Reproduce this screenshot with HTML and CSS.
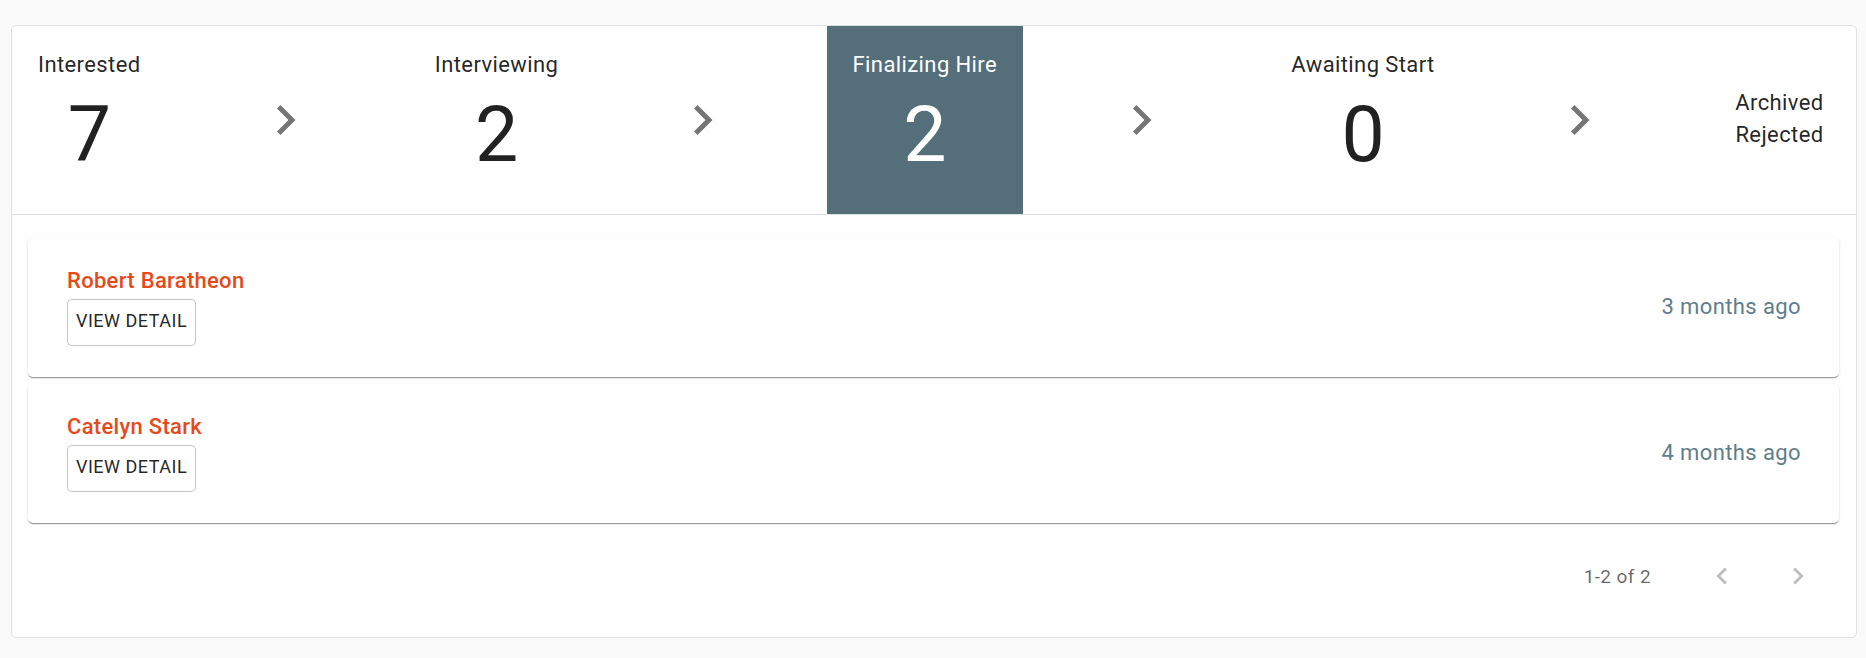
FILE: index.html
```html
<!DOCTYPE html>
<html lang="en">
<head>
<meta charset="utf-8">
<title>Pipeline</title>
<link rel="stylesheet" href="styles.css">
</head>
<body>
<div class="board">
  <div class="stages">
    <div class="stage">
      <div class="stage-label">Interested</div>
      <div class="stage-count">7</div>
    </div>
    <div class="arrow"><svg viewBox="1 0 24 24"><path d="M10 6 8.59 7.41 13.17 12l-4.58 4.59L10 18l6-6z"/></svg></div>
    <div class="stage">
      <div class="stage-label">Interviewing</div>
      <div class="stage-count">2</div>
    </div>
    <div class="arrow"><svg viewBox="1 0 24 24"><path d="M10 6 8.59 7.41 13.17 12l-4.58 4.59L10 18l6-6z"/></svg></div>
    <div class="stage active">
      <div class="stage-label">Finalizing Hire</div>
      <div class="stage-count">2</div>
    </div>
    <div class="arrow"><svg viewBox="1 0 24 24"><path d="M10 6 8.59 7.41 13.17 12l-4.58 4.59L10 18l6-6z"/></svg></div>
    <div class="stage">
      <div class="stage-label">Awaiting Start</div>
      <div class="stage-count">0</div>
    </div>
    <div class="arrow"><svg viewBox="1 0 24 24"><path d="M10 6 8.59 7.41 13.17 12l-4.58 4.59L10 18l6-6z"/></svg></div>
    <div class="stage-other">
      <div>Archived</div>
      <div>Rejected</div>
    </div>
  </div>

  <div class="candidates">
    <div class="candidate">
      <div class="candidate-info">
        <div class="candidate-name">Robert Baratheon</div>
        <button class="detail-btn">View Detail</button>
      </div>
      <div class="candidate-time">3 months ago</div>
    </div>
    <div class="candidate">
      <div class="candidate-info">
        <div class="candidate-name">Catelyn Stark</div>
        <button class="detail-btn">View Detail</button>
      </div>
      <div class="candidate-time">4 months ago</div>
    </div>
  </div>

  <div class="pagination">
    <span class="page-range">1-2 of 2</span>
    <button class="page-btn" disabled><svg viewBox="0 0 24 24"><path d="M15.41 7.41 14 6l-6 6 6 6 1.41-1.41L10.83 12z"/></svg></button>
    <button class="page-btn" disabled><svg viewBox="0 0 24 24"><path d="M10 6 8.59 7.41 13.17 12l-4.58 4.59L10 18l6-6z"/></svg></button>
  </div>
</div>
</body>
</html>
```

FILE: styles.css
```css
* {
  box-sizing: border-box;
}

html, body {
  margin: 0;
}

body {
  background: #fafafa;
  font-family: Roboto, "Liberation Sans", sans-serif;
  color: rgba(0, 0, 0, 0.87);
  padding: 25px 9px 0 11px;
}

.board {
  background: #fff;
  border: 1px solid #e0e0e0;
  border-radius: 5px;
  overflow: hidden;
}

.stages {
  display: flex;
  justify-content: space-between;
  align-items: stretch;
  height: 189px;
  border-bottom: 1px solid #e0e0e0;
}

.stage {
  display: flex;
  flex-direction: column;
  align-items: center;
  min-width: 150px;
  padding: 22px 26px 0;
  letter-spacing: 0.4px;
}

.stage-label {
  font-size: 22px;
  line-height: 33px;
}

.stage-count {
  font-size: 77px;
  font-weight: 400;
  line-height: 92px;
  margin-top: 8px;
  letter-spacing: 0;
}

.stage.active {
  background: #546e7a;
  color: #fff;
}

.arrow {
  display: flex;
  align-items: center;
}

.arrow svg {
  display: block;
  width: 60px;
  height: 60px;
  fill: #757575;
}

.stage-other {
  display: flex;
  flex-direction: column;
  justify-content: center;
  align-items: center;
  min-width: 153px;
  padding: 0 26px 2px;
  font-size: 22px;
  line-height: 32px;
  letter-spacing: 0.4px;
}

.candidates {
  display: flex;
  flex-direction: column;
  gap: 7px;
  padding: 23px 17px 0 16px;
}

.candidate {
  display: flex;
  justify-content: space-between;
  align-items: center;
  background: #fff;
  border-radius: 5px;
  padding: 28px 38px 31px 39px;
  box-shadow: 0 2px 1px -1px rgba(0, 0, 0, 0.25), 0 1px 1px 0 rgba(0, 0, 0, 0.16), 0 1px 3px 0 rgba(0, 0, 0, 0.12);
}

.candidate-info {
  display: flex;
  flex-direction: column;
  align-items: flex-start;
}

.candidate-name {
  font-size: 22px;
  font-weight: 500;
  line-height: 30px;
  letter-spacing: 0.3px;
  color: #e64a19;
}

.detail-btn {
  margin-top: 3px;
  font-family: Roboto, "Liberation Sans", sans-serif;
  font-size: 18px;
  font-weight: 400;
  line-height: 25px;
  letter-spacing: 0.5px;
  text-transform: uppercase;
  color: rgba(0, 0, 0, 0.87);
  background: #fff;
  border: 1px solid rgba(0, 0, 0, 0.23);
  border-radius: 5px;
  padding: 8px 8px 12px;
}

.candidate-time {
  font-size: 22px;
  line-height: 33px;
  letter-spacing: 0.4px;
  color: #607d8b;
}

.pagination {
  display: flex;
  justify-content: flex-end;
  align-items: center;
  height: 62px;
  margin-top: 22px;
  margin-bottom: 30px;
  padding-right: 27px;
}

.page-range {
  font-size: 19px;
  letter-spacing: 0.4px;
  color: rgba(0, 0, 0, 0.6);
  margin-right: 40px;
}

.page-btn {
  display: flex;
  align-items: center;
  justify-content: center;
  width: 62px;
  height: 62px;
  padding: 0;
  border: 0;
  background: none;
}

.page-btn + .page-btn {
  margin-left: 14px;
}

.page-btn svg {
  display: block;
  width: 34px;
  height: 34px;
  fill: rgba(0, 0, 0, 0.26);
}
```
